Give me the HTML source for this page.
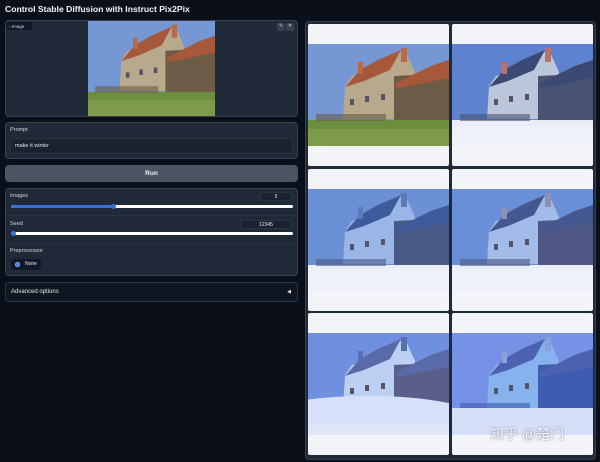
<!DOCTYPE html>
<html><head><style>
*{box-sizing:border-box;margin:0;padding:0}
body{width:600px;height:462px;background:#0b0f19;font-family:"Liberation Sans",sans-serif;color:#e5e7eb;position:relative;overflow:hidden}
.a{position:absolute}
.blk{background:#1f2937;border:1px solid #374151;border-radius:4px}
.lbl{font-size:5.5px;color:#d1d5db}
.cell{position:absolute;width:141px;height:142px;background:#f3f4f8;border-radius:2px;overflow:hidden}
.cell svg{position:absolute;left:0;top:20px;width:141px;height:102px}
</style></head><body>
<div class="a" style="left:5px;top:4px;font-size:8.6px;font-weight:bold;color:#f3f4f6">Control Stable Diffusion with Instruct Pix2Pix</div>

<div class="a blk" style="left:5px;top:20px;width:293px;height:97px"></div>
<div class="a" style="left:6px;top:22px;width:26px;height:8px;background:#111827;border-radius:2px;font-size:4.5px;color:#d1d5db;padding:1.5px 0 0 3px">▫ Image</div>
<div class="a" style="left:277px;top:23px;width:8px;height:8px;background:#374151;border-radius:2px;font-size:5px;text-align:center;color:#ccc">✎</div>
<div class="a" style="left:286px;top:23px;width:8px;height:8px;background:#374151;border-radius:2px;font-size:5px;text-align:center;color:#ccc">✕</div>
<svg class="a" style="left:88px;top:21px" width="127" height="95" viewBox="0 0 141 102" preserveAspectRatio="none"><use href="#scene0"/></svg>

<div class="a blk" style="left:5px;top:122px;width:293px;height:37px"></div>
<div class="a lbl" style="left:10px;top:127px">Prompt</div>
<div class="a" style="left:10px;top:138px;width:283px;height:16px;background:#1a2230;border:1px solid #2b3442;border-radius:3px;font-size:5.5px;color:#e5e7eb;padding:4px 0 0 4px">make it winter</div>

<div class="a" style="left:5px;top:165px;width:293px;height:17px;background:#4b5563;border-radius:4px;font-size:6.5px;font-weight:bold;text-align:center;line-height:17px;color:#f3f4f6">Run</div>

<div class="a blk" style="left:5px;top:188px;width:293px;height:88px"></div>
<div class="a lbl" style="left:10px;top:193px">Images</div>
<div class="a" style="left:260px;top:192px;width:32px;height:9px;background:#1a2230;border:1px solid #2b3442;border-radius:2px;font-size:5px;text-align:center;line-height:8px">5</div>
<div class="a" style="left:11px;top:205px;width:282px;height:3px;background:#fff;border-radius:2px"></div>
<div class="a" style="left:11px;top:205px;width:103px;height:3px;background:#3b6fe0;border-radius:2px"></div>
<div class="a" style="left:111px;top:204px;width:5px;height:5px;background:#3b6fe0;border-radius:50%"></div>
<div class="a" style="left:6px;top:215px;width:291px;height:1px;background:#2b3442"></div>
<div class="a lbl" style="left:10px;top:221px">Seed</div>
<div class="a" style="left:240px;top:220px;width:52px;height:9px;background:#1a2230;border:1px solid #2b3442;border-radius:2px;font-size:5px;text-align:center;line-height:8px">12345</div>
<div class="a" style="left:11px;top:232px;width:282px;height:3px;background:#fff;border-radius:2px"></div>
<div class="a" style="left:11px;top:231px;width:5px;height:5px;background:#3b6fe0;border-radius:50%"></div>
<div class="a" style="left:6px;top:243px;width:291px;height:1px;background:#2b3442"></div>
<div class="a lbl" style="left:10px;top:248px">Preprocessor</div>
<div class="a" style="left:11px;top:259px;width:30px;height:11px;background:#111827;border-radius:3px;font-size:5px;line-height:11px;padding-left:14px;color:#e5e7eb">None</div>
<div class="a" style="left:15px;top:262px;width:5px;height:5px;background:#3b6fe0;border-radius:50%;border:1.5px solid #93b4ff"></div>

<div class="a" style="left:5px;top:282px;width:293px;height:20px;background:#0f1521;border:1px solid #2b3442;border-radius:4px;font-size:6px;line-height:19px;padding-left:5px;color:#e5e7eb">Advanced options<span style="position:absolute;right:6px;font-size:5px">◀</span></div>

<div class="a" style="left:305px;top:21px;width:291px;height:439px;background:#1f2937;border:1px solid #374151;border-radius:4px"></div>

<svg width="0" height="0" style="position:absolute">
<defs>
<symbol id="house" viewBox="0 0 141 102">
 <polygon points="35,75 37,42 44,32 52,30 70,18 92,8 98,8 107,28 107,75" fill="var(--w)"/>
 <polygon points="37,43 52,26 70,16 93,6 82,26 56,37" fill="var(--r)"/>
 <rect x="93" y="4" width="6" height="14" fill="var(--c)"/>
 <rect x="50" y="18" width="5" height="12" fill="var(--c)"/>
 <polygon points="86,32 107,31 123,22 141,16 141,85 86,85" fill="var(--d)"/>
 <polygon points="86,40 123,22 141,16 141,34 90,44" fill="var(--r)"/>
 <rect x="42" y="55" width="4" height="6" fill="#556"/><rect x="57" y="52" width="4" height="6" fill="#556"/><rect x="73" y="50" width="4" height="6" fill="#556"/>
 <rect x="0" y="76" width="141" height="26" fill="var(--g)"/>
 <rect x="8" y="70" width="70" height="7" fill="var(--d)" opacity=".6"/>
</symbol>
<symbol id="scene0" viewBox="0 0 141 102"><rect width="141" height="102" fill="#7598d4"/><g style="--w:#b8a98c;--r:#a7583a;--c:#b56b48;--d:#6d5b48;--g:#6b8e3f"><use href="#house"/></g><rect y="85" width="141" height="17" fill="#7d9b4a"/></symbol>
<symbol id="scene1" viewBox="0 0 141 102"><rect width="141" height="102" fill="#5d82cf"/><g style="--w:#bcc6da;--r:#3a4a72;--c:#b8736a;--d:#4a5372;--g:#e8edf8"><use href="#house"/></g><rect y="82" width="141" height="20" fill="#eef1fb"/></symbol>
<symbol id="scene2" viewBox="0 0 141 102"><rect width="141" height="102" fill="#6c90d6"/><g style="--w:#9ab6e6;--r:#3e5a9a;--c:#5a7ab8;--d:#4a5a88;--g:#e9eefa"><use href="#house"/></g><rect y="80" width="141" height="22" fill="#eef1fb"/></symbol>
<symbol id="scene3" viewBox="0 0 141 102"><rect width="141" height="102" fill="#6a8fd9"/><g style="--w:#a3bbe8;--r:#44578e;--c:#8a90b8;--d:#4e5786;--g:#e9eefa"><use href="#house"/></g><rect y="80" width="141" height="22" fill="#eef1fb"/></symbol>
<symbol id="scene4" viewBox="0 0 141 102"><rect width="141" height="102" fill="#6f8fe0"/><g style="--w:#bcd0f3;--r:#5a6aa8;--c:#5570b0;--d:#5a5e8a;--g:#c9d6f5"><use href="#house"/></g><ellipse cx="60" cy="85" rx="110" ry="22" fill="#d6e0f8"/><rect y="90" width="141" height="12" fill="#dfe6fa"/></symbol>
<symbol id="scene5" viewBox="0 0 141 102"><rect width="141" height="102" fill="#7592e6"/><g style="--w:#86b2ee;--r:#4c62b0;--c:#8aa0d8;--d:#3e5cb0;--g:#cfdaf7"><use href="#house"/></g><rect y="75" width="141" height="27" fill="#d5dff8"/></symbol>
</defs></svg>

<div class="cell" style="left:308px;top:24px"><svg viewBox="0 0 141 102" preserveAspectRatio="none"><use href="#scene0"/></svg></div>
<div class="cell" style="left:452px;top:24px"><svg viewBox="0 0 141 102" preserveAspectRatio="none"><use href="#scene1"/></svg></div>
<div class="cell" style="left:308px;top:169px"><svg viewBox="0 0 141 102" preserveAspectRatio="none"><use href="#scene2"/></svg></div>
<div class="cell" style="left:452px;top:169px"><svg viewBox="0 0 141 102" preserveAspectRatio="none"><use href="#scene3"/></svg></div>
<div class="cell" style="left:308px;top:313px"><svg viewBox="0 0 141 102" preserveAspectRatio="none"><use href="#scene4"/></svg></div>
<div class="cell" style="left:452px;top:313px"><svg viewBox="0 0 141 102" preserveAspectRatio="none"><use href="#scene5"/></svg></div>
<div class="a" style="left:490px;top:424px;font-size:14px;color:#f5f7ff;opacity:.85;font-family:'Liberation Sans','Noto Sans CJK SC',sans-serif;text-shadow:0 0 2px #667">知乎 @楚门</div>
</body></html>
